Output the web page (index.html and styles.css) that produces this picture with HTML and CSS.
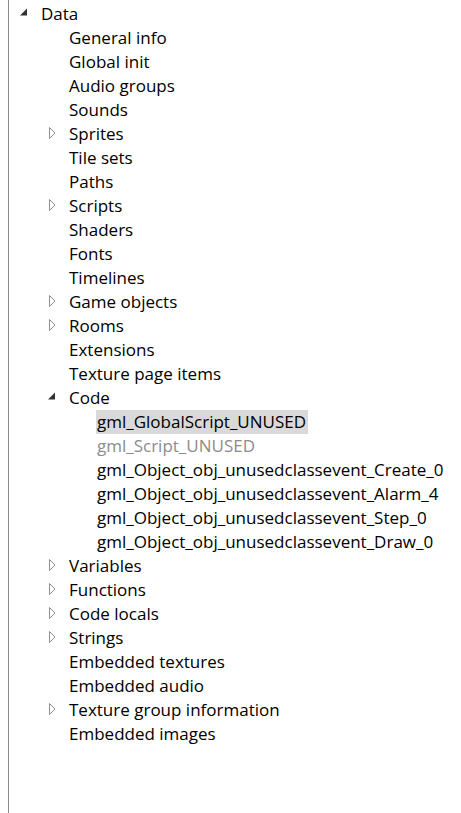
FILE: index.html
```html
<!DOCTYPE html>
<html>
<head>
<meta charset="utf-8">
<link rel="stylesheet" href="styles.css">
</head>
<body>
<div class="tree">
  <ul class="level">
    <li>
      <div class="row"><span class="toggle"><svg width="27" height="24" viewBox="0 0 27 24"><polygon class="open" points="7,13.5 14,13.5 14,6.5"/></svg></span><span class="hdr">Data</span></div>
      <ul class="level sub">
        <li><div class="row"><span class="toggle"></span><span class="hdr">General info</span></div></li>
        <li><div class="row"><span class="toggle"></span><span class="hdr">Global init</span></div></li>
        <li><div class="row"><span class="toggle"></span><span class="hdr">Audio groups</span></div></li>
        <li><div class="row"><span class="toggle"></span><span class="hdr">Sounds</span></div></li>
        <li><div class="row"><span class="toggle"><svg width="27" height="24" viewBox="0 0 27 24"><polygon class="closed" points="8.5,5.5 14,11 8.5,16.5"/></svg></span><span class="hdr">Sprites</span></div></li>
        <li><div class="row"><span class="toggle"></span><span class="hdr">Tile sets</span></div></li>
        <li><div class="row"><span class="toggle"></span><span class="hdr">Paths</span></div></li>
        <li><div class="row"><span class="toggle"><svg width="27" height="24" viewBox="0 0 27 24"><polygon class="closed" points="8.5,5.5 14,11 8.5,16.5"/></svg></span><span class="hdr">Scripts</span></div></li>
        <li><div class="row"><span class="toggle"></span><span class="hdr">Shaders</span></div></li>
        <li><div class="row"><span class="toggle"></span><span class="hdr">Fonts</span></div></li>
        <li><div class="row"><span class="toggle"></span><span class="hdr">Timelines</span></div></li>
        <li><div class="row"><span class="toggle"><svg width="27" height="24" viewBox="0 0 27 24"><polygon class="closed" points="8.5,5.5 14,11 8.5,16.5"/></svg></span><span class="hdr">Game objects</span></div></li>
        <li><div class="row"><span class="toggle"><svg width="27" height="24" viewBox="0 0 27 24"><polygon class="closed" points="8.5,5.5 14,11 8.5,16.5"/></svg></span><span class="hdr">Rooms</span></div></li>
        <li><div class="row"><span class="toggle"></span><span class="hdr">Extensions</span></div></li>
        <li><div class="row"><span class="toggle"></span><span class="hdr">Texture page items</span></div></li>
        <li>
          <div class="row"><span class="toggle"><svg width="27" height="24" viewBox="0 0 27 24"><polygon class="open" points="7,13.5 14,13.5 14,6.5"/></svg></span><span class="hdr">Code</span></div>
          <ul class="level sub">
            <li><div class="row"><span class="toggle"></span><span class="hdr selected">gml_GlobalScript_UNUSED</span></div></li>
            <li><div class="row"><span class="toggle"></span><span class="hdr muted">gml_Script_UNUSED</span></div></li>
            <li><div class="row"><span class="toggle"></span><span class="hdr">gml_Object_obj_unusedclassevent_Create_0</span></div></li>
            <li><div class="row"><span class="toggle"></span><span class="hdr">gml_Object_obj_unusedclassevent_Alarm_4</span></div></li>
            <li><div class="row"><span class="toggle"></span><span class="hdr">gml_Object_obj_unusedclassevent_Step_0</span></div></li>
            <li><div class="row"><span class="toggle"></span><span class="hdr">gml_Object_obj_unusedclassevent_Draw_0</span></div></li>
          </ul>
        </li>
        <li><div class="row"><span class="toggle"><svg width="27" height="24" viewBox="0 0 27 24"><polygon class="closed" points="8.5,5.5 14,11 8.5,16.5"/></svg></span><span class="hdr">Variables</span></div></li>
        <li><div class="row"><span class="toggle"><svg width="27" height="24" viewBox="0 0 27 24"><polygon class="closed" points="8.5,5.5 14,11 8.5,16.5"/></svg></span><span class="hdr">Functions</span></div></li>
        <li><div class="row"><span class="toggle"><svg width="27" height="24" viewBox="0 0 27 24"><polygon class="closed" points="8.5,5.5 14,11 8.5,16.5"/></svg></span><span class="hdr">Code locals</span></div></li>
        <li><div class="row"><span class="toggle"><svg width="27" height="24" viewBox="0 0 27 24"><polygon class="closed" points="8.5,5.5 14,11 8.5,16.5"/></svg></span><span class="hdr">Strings</span></div></li>
        <li><div class="row"><span class="toggle"></span><span class="hdr">Embedded textures</span></div></li>
        <li><div class="row"><span class="toggle"></span><span class="hdr">Embedded audio</span></div></li>
        <li><div class="row"><span class="toggle"><svg width="27" height="24" viewBox="0 0 27 24"><polygon class="closed" points="8.5,5.5 14,11 8.5,16.5"/></svg></span><span class="hdr">Texture group information</span></div></li>
        <li><div class="row"><span class="toggle"></span><span class="hdr">Embedded images</span></div></li>
      </ul>
    </li>
  </ul>
</div>
</body>
</html>
```
FILE: styles.css
```css
html, body {
  margin: 0;
  padding: 0;
  background: #ffffff;
}
body {
  font-family: "Open Sans", "Noto Sans", sans-serif;
  font-size: 17px;
  color: #000000;
}
.tree {
  margin-left: 8px;
  height: 813px;
  box-sizing: border-box;
  border-left: 1px solid #8a8a8a;
  padding-top: 2px;
  padding-left: 4px;
}
.level {
  list-style: none;
  margin: 0;
  padding: 0;
}
.level.sub {
  padding-left: 28px;
}
.row {
  display: flex;
  align-items: center;
  height: 24px;
}
.toggle {
  width: 27px;
  height: 24px;
  flex: none;
}
.toggle svg {
  display: block;
}
.open {
  fill: #333333;
}
.closed {
  fill: none;
  stroke: #8e8e8e;
  stroke-width: 1;
}
.hdr {
  display: block;
  height: 24px;
  line-height: 23px;
  padding: 0 2px 0 1px;
  white-space: nowrap;
}
.hdr.selected {
  background: #d9d9d9;
}
.hdr.muted {
  color: #8c8c8c;
}
```
